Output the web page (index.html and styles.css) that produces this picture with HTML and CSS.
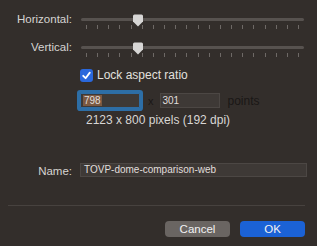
FILE: index.html
```html
<!DOCTYPE html>
<html>
<head>
<meta charset="utf-8">
<link rel="stylesheet" href="styles.css">
</head>
<body>
<div class="dialog">
  <div class="row r-h">
    <span class="lbl">Horizontal:</span>
    <div class="slider">
      <div class="track"></div>
      <div class="ticks"><i></i><i></i><i></i><i></i><i></i><i></i><i></i><i></i><i></i><i></i><i></i><i></i><i></i><i></i><i></i><i></i><i></i><i></i><i></i><i></i></div>
      <svg class="thumb" width="12" height="13" viewBox="0 0 12 13"><path d="M1 2 Q1 0.5 2.5 0.5 H9.5 Q11 0.5 11 2 V7.5 L6 12.5 L1 7.5 Z" fill="#d7d6d5"/></svg>
    </div>
  </div>
  <div class="row r-v">
    <span class="lbl">Vertical:</span>
    <div class="slider">
      <div class="track"></div>
      <div class="ticks"><i></i><i></i><i></i><i></i><i></i><i></i><i></i><i></i><i></i><i></i><i></i><i></i><i></i><i></i><i></i><i></i><i></i><i></i><i></i><i></i></div>
      <svg class="thumb" width="12" height="13" viewBox="0 0 12 13"><path d="M1 2 Q1 0.5 2.5 0.5 H9.5 Q11 0.5 11 2 V7.5 L6 12.5 L1 7.5 Z" fill="#d7d6d5"/></svg>
    </div>
  </div>
  <div class="row r-lock">
    <span></span>
    <div class="check">
      <span class="box"><svg width="13" height="13" viewBox="0 0 13 13"><path d="M3.2 6.8 L5.6 9.2 L9.8 3.6" fill="none" stroke="#fff" stroke-width="1.8" stroke-linecap="round" stroke-linejoin="round"/></svg></span>
      <span>Lock aspect ratio</span>
    </div>
  </div>
  <div class="row r-size">
    <span></span>
    <div class="sizes">
      <div class="field focus"><span class="sel">798</span></div>
      <span class="dark x">x</span>
      <div class="field">301</div>
      <span class="dark pts">points</span>
    </div>
  </div>
  <div class="row r-pix">
    <span></span>
    <span class="pix">2123 x 800 pixels (192 dpi)</span>
  </div>
  <div class="row r-name">
    <span class="lbl">Name:</span>
    <div class="field wide">TOVP-dome-comparison-web</div>
  </div>
  <div class="sep"></div>
  <div class="buttons">
    <span class="btn cancel">Cancel</span>
    <span class="btn ok">OK</span>
  </div>
</div>
</body>
</html>
```
FILE: styles.css
```css
html, body {
  margin: 0;
  padding: 0;
  background: #332e2b;
}
body {
  width: 317px;
  height: 246px;
  overflow: hidden;
  font-family: "Liberation Sans", Arial, Helvetica, sans-serif;
  font-size: 12px;
  color: #dcdad8;
}
.dialog {
  padding: 13px 12px 0 0;
}
.row {
  display: grid;
  grid-template-columns: 72px 1fr;
  column-gap: 8px;
}
.lbl {
  text-align: right;
  font-size: 11.5px;
  color: #d6d4d2;
}
.r-h .lbl, .r-v .lbl {
  line-height: 12px;
}
.r-v { margin-top: 12px; }
.slider {
  position: relative;
  height: 16px;
  margin-left: 1px;
  margin-right: 1px;
}
.track {
  margin-top: 5px;
  height: 3px;
  border-radius: 2px;
  background: #57524f;
}
.ticks {
  display: flex;
  justify-content: space-between;
  padding: 0 5px;
  margin-top: 4px;
  height: 4px;
}
.ticks i {
  width: 1px;
  height: 4px;
  background: #6e6966;
}
.thumb {
  position: absolute;
  left: 51px;
  top: 1px;
}
.r-lock {
  margin-top: 12px;
  height: 13px;
}
.check {
  display: flex;
  align-items: center;
  gap: 4px;
  line-height: 13px;
  color: #e2e0de;
}
.box {
  width: 13px;
  height: 13px;
  border-radius: 3px;
  background: #2a68dc;
  display: block;
}
.box svg { display: block; }
.r-size { margin-top: 11px; }
.sizes {
  display: flex;
  align-items: center;
  height: 15px;
}
.field {
  box-sizing: border-box;
  height: 15px;
  width: 60px;
  background: #3e3936;
  border: 1px solid #4c4744;
  padding: 0 2px;
  font-size: 10px;
  line-height: 13px;
  color: #e0dedc;
}
.field.focus {
  border-color: #2e6da4;
  box-shadow: 0 0 0 3px #2d6ea6;
  border-radius: 1px;
}
.sel {
  background: #7a5942;
  padding: 0 1px;
}
.dark {
  color: #1a1716;
}
.x { margin: 0 6px 0 8px; font-size: 11px; }
.pts { margin-left: 8px; }
.r-pix {
  margin-top: 5px;
  line-height: 14px;
}
.pix {
  padding-left: 6px;
  color: #d8d6d4;
}
.r-name {
  margin-top: 36px;
  align-items: center;
}
.r-name .lbl { padding-top: 2px; }
.field.wide {
  width: auto;
  height: 14px;
  margin-right: -2px;
  line-height: 12px;
  padding-left: 3px;
}
.sep {
  margin: 28px 0 0 8px;
  height: 1px;
  background: #47423f;
}
.buttons {
  display: flex;
  justify-content: flex-end;
  gap: 10px;
  margin-top: 15px;
}
.btn {
  width: 65px;
  height: 16px;
  border-radius: 4px;
  text-align: center;
  line-height: 16px;
  font-size: 11.5px;
  color: #f2f2f2;
}
.cancel { background: #6a6562; }
.ok { background: #1b62d6; }
```
